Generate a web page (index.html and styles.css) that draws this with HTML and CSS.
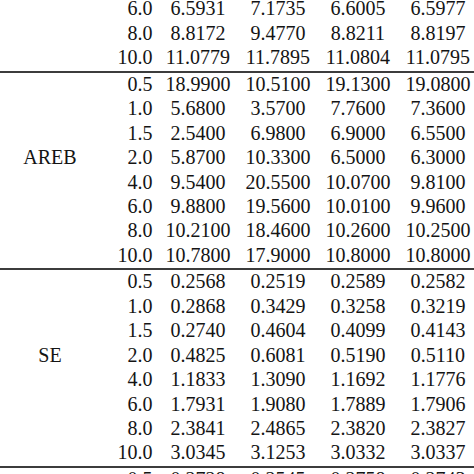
FILE: index.html
```html
<!DOCTYPE html>
<html>
<head>
<meta charset="utf-8">
<link rel="stylesheet" href="styles.css">
</head>
<body>
<table class="results">
  <colgroup>
    <col class="c-label"><col class="c-param"><col class="c-val"><col class="c-val"><col class="c-val"><col class="c-val">
  </colgroup>
  <tbody class="lead">
    <tr><td class="label"></td><td class="param">6.0</td><td>6.5931</td><td>7.1735</td><td>6.6005</td><td>6.5977</td></tr>
    <tr><td class="label"></td><td class="param">8.0</td><td>8.8172</td><td>9.4770</td><td>8.8211</td><td>8.8197</td></tr>
    <tr><td class="label"></td><td class="param">10.0</td><td>11.0779</td><td>11.7895</td><td>11.0804</td><td>11.0795</td></tr>
  </tbody>
  <tbody class="group">
    <tr><td class="label"></td><td class="param">0.5</td><td>18.9900</td><td>10.5100</td><td>19.1300</td><td>19.0800</td></tr>
    <tr><td class="label"></td><td class="param">1.0</td><td>5.6800</td><td>3.5700</td><td>7.7600</td><td>7.3600</td></tr>
    <tr><td class="label"></td><td class="param">1.5</td><td>2.5400</td><td>6.9800</td><td>6.9000</td><td>6.5500</td></tr>
    <tr><td class="label">AREB</td><td class="param">2.0</td><td>5.8700</td><td>10.3300</td><td>6.5000</td><td>6.3000</td></tr>
    <tr><td class="label"></td><td class="param">4.0</td><td>9.5400</td><td>20.5500</td><td>10.0700</td><td>9.8100</td></tr>
    <tr><td class="label"></td><td class="param">6.0</td><td>9.8800</td><td>19.5600</td><td>10.0100</td><td>9.9600</td></tr>
    <tr><td class="label"></td><td class="param">8.0</td><td>10.2100</td><td>18.4600</td><td>10.2600</td><td>10.2500</td></tr>
    <tr><td class="label"></td><td class="param">10.0</td><td>10.7800</td><td>17.9000</td><td>10.8000</td><td>10.8000</td></tr>
  </tbody>
  <tbody class="group">
    <tr><td class="label"></td><td class="param">0.5</td><td>0.2568</td><td>0.2519</td><td>0.2589</td><td>0.2582</td></tr>
    <tr><td class="label"></td><td class="param">1.0</td><td>0.2868</td><td>0.3429</td><td>0.3258</td><td>0.3219</td></tr>
    <tr><td class="label"></td><td class="param">1.5</td><td>0.2740</td><td>0.4604</td><td>0.4099</td><td>0.4143</td></tr>
    <tr><td class="label">SE</td><td class="param">2.0</td><td>0.4825</td><td>0.6081</td><td>0.5190</td><td>0.5110</td></tr>
    <tr><td class="label"></td><td class="param">4.0</td><td>1.1833</td><td>1.3090</td><td>1.1692</td><td>1.1776</td></tr>
    <tr><td class="label"></td><td class="param">6.0</td><td>1.7931</td><td>1.9080</td><td>1.7889</td><td>1.7906</td></tr>
    <tr><td class="label"></td><td class="param">8.0</td><td>2.3841</td><td>2.4865</td><td>2.3820</td><td>2.3827</td></tr>
    <tr><td class="label"></td><td class="param">10.0</td><td>3.0345</td><td>3.1253</td><td>3.0332</td><td>3.0337</td></tr>
  </tbody>
  <tbody class="group">
    <tr><td class="label"></td><td class="param">0.5</td><td>0.2728</td><td>0.2545</td><td>0.2758</td><td>0.2743</td></tr>
  </tbody>
</table>
</body>
</html>
```

FILE: styles.css
```css
html, body {
  margin: 0;
  padding: 0;
  background: #ffffff;
  overflow: hidden;
}

body {
  width: 474px;
  height: 474px;
}

.results {
  width: 478px;
  table-layout: fixed;
  border-collapse: separate;
  border-spacing: 0;
  font-family: "Liberation Serif", "Times New Roman", serif;
  font-size: 20px;
  color: #141414;
}

.c-label { width: 100px; }
.c-param { width: 58px; }
.c-val { width: 80px; }

.results td {
  padding: 1px 0 3.44px 0;
  line-height: 20px;
  text-align: center;
  white-space: nowrap;
  vertical-align: top;
}

.results td.param {
  text-align: right;
  padding-right: 5.5px;
}

.results td.label {
  text-align: center;
}

/* first visible row is partly scrolled off in the original crop */
.lead tr:first-child td {
  line-height: 15px;
  padding-bottom: 5.94px;
}

.group tr:first-child td {
  border-top: 2px solid #3c3c3c;
}
```
